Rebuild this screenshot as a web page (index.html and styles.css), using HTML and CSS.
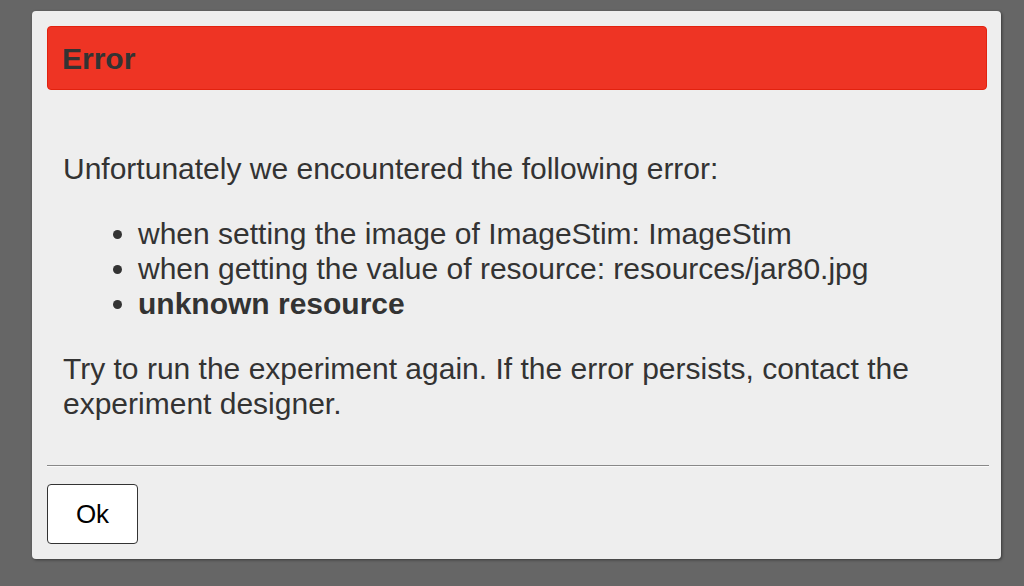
FILE: index.html
```html
<!DOCTYPE html>
<html lang="en">
<head>
    <meta charset="UTF-8">
    <meta name="viewport" content="width=device-width, initial-scale=1.0">
    <title>Error</title>
    <link rel="stylesheet" href="styles.css">
</head>
<body>
    <div class="dialog">
        <div class="dialog-header">Error</div>
        <div class="dialog-body">
            <p>Unfortunately we encountered the following error:</p>
            <ul>
                <li>when setting the image of ImageStim: ImageStim</li>
                <li>when getting the value of resource: resources/jar80.jpg</li>
                <li><strong>unknown resource</strong></li>
            </ul>
            <p>Try to run the experiment again. If the error persists, contact the experiment designer.</p>
        </div>
        <hr class="divider">
        <button class="ok-button">Ok</button>
    </div>
</body>
</html>
```

FILE: styles.css
```css
html, body {
    height: 100%;
}
body {
    margin: 0;
    padding: 11px 0 0 32px;
    box-sizing: border-box;
    background-color: #666;
    font-family: 'Liberation Sans', Arial, sans-serif;
    overflow: hidden;
}
.dialog {
    width: 969px;
    box-sizing: border-box;
    padding: 15px 14px 15px 15px;
    background-color: #eee;
    border-radius: 4px;
    box-shadow: 1px 1px 3px rgba(0, 0, 0, 0.45);
}
.dialog-header {
    height: 64px;
    box-sizing: border-box;
    display: flex;
    align-items: center;
    padding: 1px 0 0 14px;
    background-color: #ee3424;
    border: 1px solid #e2220f;
    border-radius: 4px;
    color: #333;
    font-size: 30px;
    font-weight: bold;
}
.dialog-body {
    padding: 31px 16px 14px;
    color: #333;
    font-size: 30px;
    line-height: 35px;
}
.dialog-body p,
.dialog-body ul {
    margin: 30px 0;
}
.dialog-body ul {
    padding-left: 75px;
}
.divider {
    margin: 0 -2px 0 0;
    border: 0;
    border-top: 1px solid #888;
    border-bottom: 1px solid #fafafa;
}
.ok-button {
    display: block;
    margin-top: 17px;
    width: 91px;
    height: 60px;
    background-color: #fff;
    border: 1px solid #333;
    border-radius: 4px;
    color: #000;
    font-family: 'Liberation Sans', Arial, sans-serif;
    font-size: 26px;
    padding: 0;
}
```
